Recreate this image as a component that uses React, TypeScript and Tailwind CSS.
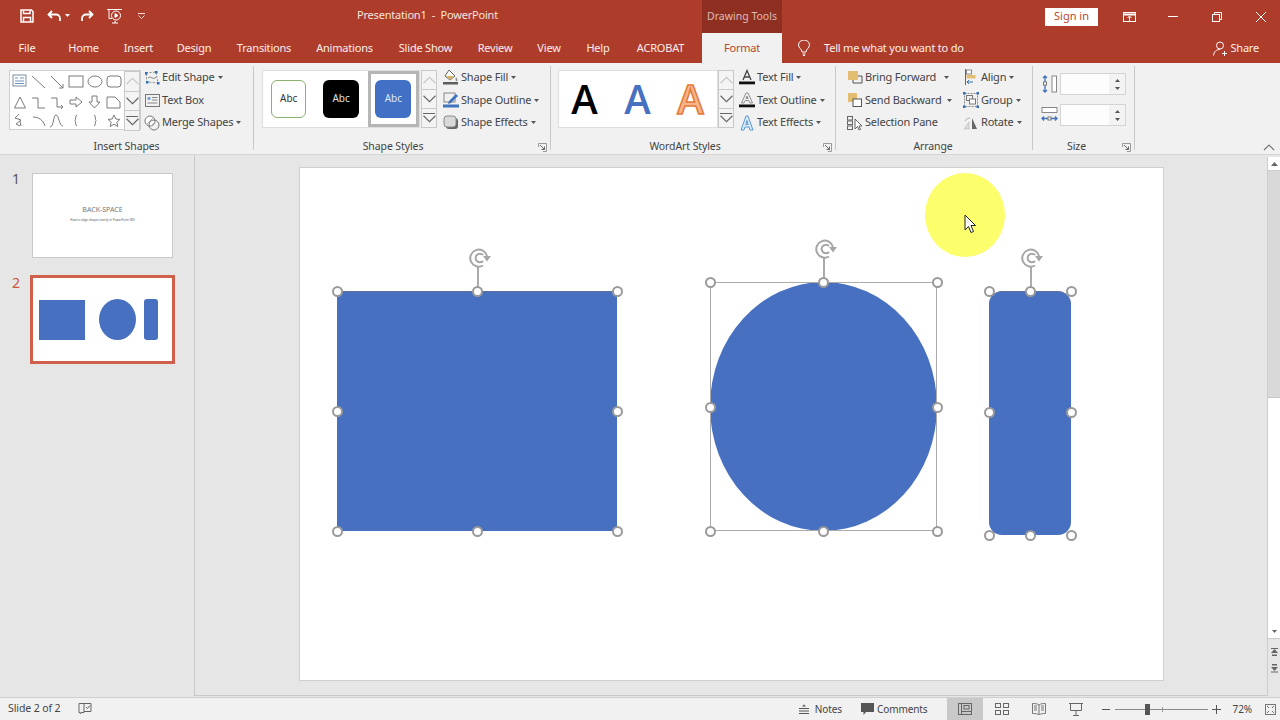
import React from "react";

const TABS: [string, number][] = [
  ["File", 54], ["Home", 59], ["Insert", 51], ["Design", 60], ["Transitions", 80], ["Animations", 81],
  ["Slide Show", 81], ["Review", 58], ["View", 50], ["Help", 48], ["ACROBAT", 77],
];

function Caret({ className = "text-[#555]" }: { className?: string }) {
  return (
    <svg width="5" height="3" viewBox="0 0 5 3" className={className}>
      <path d="M0 0h5L2.500 3z" fill="currentColor" />
    </svg>
  );
}

function Chevron({ up = false, faded = false }: { up?: boolean; faded?: boolean }) {
  return (
    <svg width="13" height="8" viewBox="0 0 12 7">
      <path d={up ? "M0.5 6.5L6 1l5.5 5.5" : "M0.5 0.5L6 6l5.5-5.5"} fill="none" stroke={faded ? "#c8c8c8" : "#666"} strokeWidth="1" />
    </svg>
  );
}

function GalleryScroll({ height = "h-[60px]" }: { height?: string }) {
  return (
    <div className={`flex flex-col w-4 ${height} border border-[#c9c9c9] bg-[#f4f4f4] divide-y divide-[#c9c9c9]`}>
      <div className="flex-1 flex items-center justify-center"><Chevron up faded /></div>
      <div className="flex-1 flex items-center justify-center"><Chevron /></div>
      <div className="flex-1 flex flex-col items-center justify-center gap-[1px]">
        <div className="w-3 h-px bg-[#666]" />
        <Chevron />
      </div>
    </div>
  );
}

function Launcher() {
  return (
    <svg width="9" height="9" viewBox="0 0 9 9" className="absolute right-[3px] bottom-[2px]">
      <path d="M0.5 4V0.5H8.5V8.5H5" fill="none" stroke="#9a9a9a" />
      <path d="M2 2l4.5 4.5M6.5 3.500v3h-3" fill="none" stroke="#666" />
    </svg>
  );
}

function Group({ width, label, pr = "", launcher = false, children }: { width: string; label: string; pr?: string; launcher?: boolean; children: React.ReactNode }) {
  return (
    <div className={`relative flex flex-col h-full shrink-0 ${width}`}>
      <div className="flex-1 flex min-h-0">{children}</div>
      <div className={`h-[20px] pt-[6px] flex items-center justify-center text-[10.500px] tracking-[-0.1px] text-[#444] ${pr}`}>{label}</div>
      {launcher && <Launcher />}
    </div>
  );
}

function Sep() {
  return <div className="w-px h-[84px] mt-[3px] bg-[#c8c8c8] shrink-0" />;
}

function Cmd({ icon, label, caret = true, gap = "ml-[3px]" }: { icon: React.ReactNode; label: string; caret?: boolean; gap?: string }) {
  return (
    <div className="h-[23px] flex items-center text-[11px] tracking-[-0.2px] text-[#444] whitespace-nowrap">
      <span className="w-[16px] h-[16px] flex items-center justify-center shrink-0">{icon}</span>
      <span className="ml-[2px]">{label}</span>
      {caret && <span className={`${gap} flex`}><Caret /></span>}
    </div>
  );
}

const ShapesGallery = () => (
  <svg width="114" height="60" viewBox="0 0 114 60" fill="none" stroke="#7a7a7a" strokeWidth="1">
    <rect x="3" y="4" width="13" height="11" fill="#fff" stroke="#7a8ba5" />
    <path d="M5 7h3M5 10h9M5 12.500h9M10 7h4" stroke="#6f93c4" />
    <path d="M22 5l13 12M41 5l12 12M53 17v-4M53 17h-4" />
    <rect x="59" y="5" width="14" height="11" />
    <ellipse cx="85" cy="10.500" rx="7" ry="5.500" />
    <rect x="97" y="5" width="14" height="11" rx="3" />
    <path d="M4.500 37L10 26l5.500 11z" />
    <path d="M22 27h6v10h7M41 27h6v9h6l-2-2M51 38l2-2" />
    <path d="M60 29h6v-3l6 5-6 5v-3h-6z" />
    <path d="M82 25h5v6h3l-5.500 6-5.500-6h3z" />
    <path d="M97 26h8l5 5v6H97z" />
    <path d="M9 43l-4 4 6 2-5 4 4 2M10 50l1 5" />
    <path d="M23 46c6 0 10 3 12 9M40 56c4 0 3-12 6-12s3 11 7 11" />
    <path d="M66 44c-2 0-1 5-2 5.500c1 .5 0 5.500 2 5.500M83 44c2 0 1 5 2 5.500c-1 .5 0 5.500-2 5.500" transform="translate(1 0)" />
    <path d="M104 44l1.800 4 4.200.4-3.200 2.800 1 4.300-3.800-2.300-3.800 2.300 1-4.300-3.200-2.800 4.200-.4z" />
  </svg>
);

const EditShapeIcon = () => (
  <svg width="16" height="15" viewBox="0 0 16 15" fill="none">
    <path d="M2 3l10-1 2 11-11-1z" stroke="#888" strokeDasharray="2 1.500" />
    <path d="M4 8c3-3 5 3 8-1" stroke="#888" />
    <g fill="#2f6fb5"><rect x="1" y="2" width="2.500" height="2.500" /><rect x="11" y="1" width="2.500" height="2.500" /><rect x="13" y="12" width="2.500" height="2.500" /><rect x="2" y="11" width="2.500" height="2.500" /></g>
  </svg>
);

const TextBoxIcon = () => (
  <svg width="15" height="13" viewBox="0 0 15 13" fill="none">
    <rect x="0.500" y="0.500" width="14" height="12" stroke="#777" />
    <path d="M2.500 3h3v3h-3z" fill="#7fa2cf" />
    <path d="M7 3.500h5.500M7 6h5.500M2.500 9h10" stroke="#888" />
  </svg>
);

const MergeIcon = () => (
  <svg width="16" height="16" viewBox="0 0 16 16" fill="none" stroke="#777">
    <circle cx="6" cy="6" r="5" fill="#fff" />
    <circle cx="10" cy="10" r="5" />
    <path d="M3 9l6-6M7 11l4-4" stroke="#aaa" />
  </svg>
);

const FillIcon = () => (
  <svg width="16" height="16" viewBox="0 0 16 16" fill="none">
    <path d="M6 1l6 6-5 4-5-4z" fill="#fff" stroke="#666" />
    <path d="M3 7h8l-4 4z" fill="#d9b36a" />
    <path d="M13 8c1 2 2 3 1 4s-2-1-1-4z" fill="#888" />
    <rect x="0" y="13" width="15" height="2.500" fill="#5d5d5d" />
  </svg>
);

const OutlineIcon = () => (
  <svg width="16" height="16" viewBox="0 0 16 16" fill="none">
    <rect x="1" y="1" width="11" height="9" stroke="#888" />
    <path d="M6 9l7-7 2 2-7 7-3 1z" fill="#3f72bf" />
    <rect x="0" y="12.500" width="16" height="3" fill="#3f72bf" />
  </svg>
);

const EffectsIcon = () => (
  <svg width="16" height="15" viewBox="0 0 16 15">
    <rect x="3" y="3" width="12" height="11" rx="3" fill="#666" />
    <rect x="1" y="1" width="12" height="11" rx="3" fill="#d9d9d9" stroke="#8a8a8a" />
  </svg>
);

const TextFillIcon = () => (
  <svg width="16" height="16" viewBox="0 0 16 16" fill="none">
    <path d="M4 11L8 1.500 12 11M5.500 8h5" stroke="#444" strokeWidth="1.300" />
    <rect x="0" y="12.500" width="16" height="2.800" fill="#111" />
  </svg>
);

const TextOutlineIcon = () => (
  <svg width="16" height="16" viewBox="0 0 16 16" fill="none">
    <path d="M2.500 11L7 1h2l4.500 10h-2.500L9.800 8.500H6.200L5 11zM7 6.500h2L8 4z" stroke="#777" strokeWidth="0.800" />
    <rect x="0" y="12.500" width="16" height="2.800" fill="#111" />
  </svg>
);

const TextEffectsIcon = () => (
  <svg width="16" height="16" viewBox="0 0 16 16" fill="#d7e9f7" stroke="#5b9bd5" strokeWidth="1">
    <path d="M2 15L7 1h2l5 14h-3l-1-3H6l-1 3zM6.800 9.500h2.400L8 5.500z" />
  </svg>
);

const BringIcon = () => (
  <svg width="16" height="15" viewBox="0 0 16 15">
    <rect x="1" y="1" width="10" height="9" fill="#e2bd72" />
    <path d="M11 6h4v7H6v-3" fill="none" stroke="#555" />
  </svg>
);

const SendIcon = () => (
  <svg width="16" height="16" viewBox="0 0 16 16">
    <rect x="1" y="1" width="9" height="9" fill="#e2bd72" />
    <rect x="6" y="7" width="8.500" height="7.500" fill="#fff" stroke="#555" />
  </svg>
);

const PaneIcon = () => (
  <svg width="16" height="16" viewBox="0 0 16 16" fill="none" stroke="#666">
    <rect x="0.500" y="1.500" width="5" height="3.500" />
    <rect x="0.500" y="6" width="5" height="3.500" />
    <rect x="0.500" y="11" width="5" height="3.500" />
    <path d="M8 4v10l2.500-2.500 1.500 3.500 1.500-.7-1.500-3.300h3z" fill="#fff" />
  </svg>
);

const AlignIcon = () => (
  <svg width="16" height="16" viewBox="0 0 16 16" fill="none">
    <path d="M2.500 0v16" stroke="#666" />
    <rect x="3.500" y="1" width="5" height="4" fill="#fff" stroke="#888" />
    <rect x="3.500" y="6" width="9" height="3.500" fill="#e2bd72" />
    <path d="M10 13H4M6 11l-2 2 2 2" stroke="#2f6fb5" />
  </svg>
);

const GroupIcon = () => (
  <svg width="16" height="16" viewBox="0 0 16 16" fill="none">
    <rect x="1.500" y="1.500" width="13" height="13" stroke="#8a8a8a" strokeDasharray="2 1" />
    <rect x="3.500" y="3.500" width="6" height="5" stroke="#777" />
    <rect x="6.500" y="7" width="6" height="5" fill="#fff" stroke="#777" />
    <g fill="#2f6fb5"><rect x="0" y="0" width="2.500" height="2.500" /><rect x="13.500" y="0" width="2.500" height="2.500" /><rect x="0" y="13.500" width="2.500" height="2.500" /><rect x="13.500" y="13.500" width="2.500" height="2.500" /></g>
  </svg>
);

const RotateIcon = () => (
  <svg width="16" height="14" viewBox="0 0 16 14">
    <path d="M9 13V2l5 11z" fill="#666" />
    <path d="M1 13l5-7v7z" fill="#ddd" stroke="#aaa" strokeWidth="0.500" />
    <path d="M2 5c1-2 3-3 5-3" fill="none" stroke="#aaa" />
  </svg>
);

const HeightIcon = () => (
  <svg width="17" height="18" viewBox="0 0 17 18" fill="none">
    <path d="M4 1v16M2 3l2-2 2 2M2 15l2 2 2-2" stroke="#3f72bf" strokeWidth="1.300" />
    <rect x="2.500" y="7" width="3" height="3" fill="#fff" stroke="#777" />
    <rect x="11" y="1" width="4.500" height="16" fill="#fff" stroke="#888" />
  </svg>
);

const WidthIcon = () => (
  <svg width="17" height="18" viewBox="0 0 17 18" fill="none">
    <rect x="1" y="1.500" width="15" height="5" fill="#fff" stroke="#888" />
    <path d="M1 12.500h15M3 10.500l-2 2 2 2M14 10.500l2 2-2 2" stroke="#3f72bf" strokeWidth="1.300" />
    <rect x="7" y="11" width="3" height="3" fill="#fff" stroke="#777" />
  </svg>
);

function SizeInput() {
  return (
    <div className="w-[66px] h-[22px] flex items-stretch bg-[#fdfdfd] border border-[#d4d4d4]">
      <div className="flex-1" />
      <div className="w-[16px] flex flex-col items-center justify-center gap-[5px] bg-[#f3f3f3]">
        <svg width="5" height="3" viewBox="0 0 5 3"><path d="M0 3h5L2.500 0z" fill="#555" /></svg>
        <Caret />
      </div>
    </div>
  );
}

type Pt = [number, number];
type Sel = { x: number; y: number; w: number; h: number; shape: string; rot: Pt; xs: number[]; ys: number[]; box: boolean };

const SLIDE_SHAPES: Sel[] = [
  { x: 37, y: 123, w: 280, h: 240, shape: "bg-[#4870c0] border-t border-[#5a6f9e]", rot: [179, 90], xs: [37, 177, 317], ys: [123, 243, 363], box: false },
  { x: 410, y: 114, w: 227, h: 249, shape: "bg-[#4870c0] rounded-[50%]", rot: [525, 81], xs: [410, 523, 637], ys: [114, 239, 363], box: true },
  { x: 689, y: 123, w: 82, h: 244, shape: "bg-[#4870c0] rounded-[13px] border-t border-[#5a6f9e]", rot: [731, 90], xs: [689, 730, 771], ys: [123, 244, 367], box: false },
];

function RotHandle({ at }: { at: Pt }) {
  return (
    <svg width="24" height="22" viewBox="0 0 24 22" className="absolute" style={{ left: at[0] - 11, top: at[1] - 11 }} fill="none">
      <path d="M19 9A8.500 8.500 0 1 0 15 18.500" stroke="#a6a6a6" strokeWidth="2" />
      <path d="M15 14A4.300 4.300 0 1 1 15 8" stroke="#a6a6a6" strokeWidth="2" />
      <path d="M15 9h8l-4 5.500z" fill="#a6a6a6" />
    </svg>
  );
}

function SlideShape({ s }: { s: Sel }) {
  const pts: Pt[] = [];
  s.ys.forEach((y, j) => s.xs.forEach((x, i) => { if (!(i === 1 && j === 1)) pts.push([x, y]); }));
  return (
    <>
      <div className={`absolute ${s.shape}`} style={{ left: s.x, top: s.y, width: s.w, height: s.h }} />
      {s.box && <div className="absolute border border-[#ababab]" style={{ left: s.x, top: s.y, width: s.w, height: s.h }} />}
      <div className="absolute w-[1.500px] bg-[#ababab]" style={{ left: s.xs[1], top: s.rot[1] + 9, height: s.y - s.rot[1] - 9 }} />
      <RotHandle at={s.rot} />
      {pts.map(([x, y]) => (
        <div key={`${x}-${y}`} className="absolute w-[11px] h-[11px] rounded-full bg-white border-2 border-[#9a9a9a]" style={{ left: x - 5, top: y - 5 }} />
      ))}
    </>
  );
}

export default function App() {
  return (
    <div className="w-[1280px] h-[720px] overflow-hidden flex flex-col bg-[#e6e6e6] [font-family:'Noto_Sans',sans-serif]">
      {/* Title bar */}
      <div className="relative h-[33px] shrink-0 bg-[#ae3c2b] flex items-center text-white">
        <div className="flex items-center pl-[20px] pb-[2px]">
          <svg width="14" height="14" viewBox="0 0 14 14" fill="none" stroke="#fff" strokeWidth="1.500">
            <path d="M1 1h10.500L13 2.500V13H1z" />
            <path d="M3.500 1.500v3h6.500v-3M3.500 13V8.500h7V13" />
          </svg>
          <svg width="15" height="12" viewBox="0 0 15 12" fill="none" stroke="#fff" strokeWidth="1.800" className="ml-[13px]">
            <path d="M5 1L1.500 4.500 5 8M2 4.500h7a4 4 0 0 1 4 4V11" />
          </svg>
          <span className="ml-[3px] flex"><Caret className="text-white" /></span>
          <svg width="14" height="12" viewBox="0 0 14 12" fill="none" stroke="#fff" strokeWidth="1.800" className="ml-[10px]">
            <path d="M9 1l3.500 3.500L9 8M12 4.500H6a4 4 0 0 0-4 4V11" />
          </svg>
          <svg width="16" height="16" viewBox="0 0 16 16" fill="none" stroke="#fff" className="ml-[13px]">
            <path d="M0 1.500h15M2 1.500v9h3M5 15h6M8 13v2" />
            <circle cx="9" cy="7.500" r="4.500" />
            <path d="M8 5.500l3 2-3 2z" fill="#fff" />
          </svg>
          <svg width="7" height="6" viewBox="0 0 7 6" fill="none" stroke="#f1d7d2" className="ml-[15px]">
            <path d="M0 .5h7M.5 2.500L3.500 5.500 6.500 2.500" />
          </svg>
        </div>
        <div className="absolute left-[357px] top-[7px] text-[11px] tracking-[-0.2px] text-[#f5e3df] whitespace-pre">Presentation1  -  PowerPoint</div>
        <div className="absolute left-[702px] top-0 w-[80px] h-[33px] bg-[#8f2f21] flex items-center justify-center text-[10.500px] text-[#ddbcb5]">Drawing Tools</div>
        <div className="ml-auto flex items-center">
          <div className="w-[53px] h-[18px] bg-white flex items-center justify-center text-[11px] text-[#b7472a]">Sign in</div>
          <svg width="13" height="10" viewBox="0 0 13 10" fill="none" stroke="#fff" className="ml-[25px]">
            <rect x="0.500" y="0.500" width="12" height="9" />
            <path d="M0.500 2.500h12" strokeWidth="2" />
            <path d="M6.500 9V4.500M4.500 6l2-2 2 2" />
          </svg>
          <div className="w-[10px] h-px bg-white ml-[32px]" />
          <svg width="10" height="10" viewBox="0 0 10 10" fill="none" stroke="#fff" className="ml-[34px]">
            <rect x="0.500" y="2.500" width="7" height="7" />
            <path d="M2.500 2.500v-2h7v7h-2" />
          </svg>
          <svg width="10" height="10" viewBox="0 0 10 10" fill="none" stroke="#fff" className="ml-[34px] mr-[14px]">
            <path d="M0 0l10 10M10 0L0 10" />
          </svg>
        </div>
      </div>

      {/* Tabs */}
      <div className="h-[30px] shrink-0 bg-[#ae3c2b] flex items-stretch text-[11px] tracking-[-0.2px] text-[#fbeeeb]">
        {TABS.map(([t, w]) => (
          <div key={t} className="flex items-center justify-center" style={{ width: w }}>{t}</div>
        ))}
        <div className="ml-[3px] w-[80px] bg-[#f1f1f1] text-[#b7472a] flex items-center justify-center">Format</div>
        <svg width="12" height="16" viewBox="0 0 12 16" fill="none" stroke="#fff" className="ml-[16px] self-center">
          <path d="M4 12c0-3-3.500-4-3.500-7a5.500 5 0 0 1 11 0c0 3-3.500 4-3.500 7zM4.500 14h3M5 15.500h2" />
        </svg>
        <div className="ml-[14px] flex items-center">Tell me what you want to do</div>
        <div className="ml-auto flex items-center mr-[21px]">
          <svg width="14" height="15" viewBox="0 0 14 15" fill="none" stroke="#fff">
            <circle cx="7" cy="4.500" r="3.500" />
            <path d="M0.500 14.500c.5-4 3-6 6.500-6M9 12.500h5M11.500 10v5" />
          </svg>
          <span className="ml-[3px]">Share</span>
        </div>
      </div>

      {/* Ribbon */}
      <div className="relative h-[92px] shrink-0 bg-[#f1f1f1] border-b border-[#d6d6d6] flex items-start">
        <Group width="w-[253px]" label="Insert Shapes">
          <div className="mt-[7px] ml-[9px] h-[60px] bg-white border border-[#cfcfcf] flex">
            <ShapesGallery />
            <GalleryScroll />
          </div>
          <div className="ml-[3px] mt-[3px] flex flex-col">
            <Cmd icon={<EditShapeIcon />} label="Edit Shape" />
            <Cmd icon={<TextBoxIcon />} label="Text Box" caret={false} />
            <Cmd icon={<MergeIcon />} label="Merge Shapes" />
          </div>
        </Group>
        <Sep />
        <Group width="w-[296px]" label="Shape Styles" pr="pr-[18px]" launcher>
          <div className="mt-[7px] ml-[8px] flex">
            <div className="w-[158px] h-[58px] bg-white border border-[#dedede] flex items-center pl-[8px] relative text-[10px]">
              <div className="w-[36px] h-[38px] rounded-[6px] bg-white border border-[#8cb26f] flex items-center justify-center pb-[2px] text-[#333]">Abc</div>
              <div className="ml-[17px] w-[36px] h-[38px] rounded-[6px] bg-black flex items-center justify-center pb-[2px] text-[#e0e0e0]">Abc</div>
              <div className="ml-[9px] w-[52px] h-[56px] border-[3px] border-[#b6b6b6] flex items-center justify-center">
                <div className="w-[36px] h-[38px] rounded-[6px] bg-[#4270c4] flex items-center justify-center pb-[2px] text-[#dfe7f5]">Abc</div>
              </div>
            </div>
            <div className="ml-[1px]"><GalleryScroll height="h-[58px]" /></div>
          </div>
          <div className="ml-[6px] mt-[3px] flex flex-col">
            <Cmd icon={<FillIcon />} label="Shape Fill" />
            <Cmd icon={<OutlineIcon />} label="Shape Outline" />
            <Cmd icon={<EffectsIcon />} label="Shape Effects" />
          </div>
        </Group>
        <Sep />
        <Group width="w-[284px]" label="WordArt Styles" pr="pr-[16px]" launcher>
          <div className="mt-[7px] ml-[7px] flex">
            <div className="w-[160px] h-[58px] bg-white border border-[#dedede] flex items-center text-[40px] font-semibold leading-none [font-family:'Open_Sans',sans-serif]">
              <span className="w-[53px] text-center ml-[-1px] text-black">A</span>
              <span className="w-[53px] text-center text-[#4870c0]">A</span>
              <span className="w-[53px] text-center text-[#f6b48a] [-webkit-text-stroke:1.500px_#e4793a]">A</span>
            </div>
            <GalleryScroll height="h-[58px]" />
          </div>
          <div className="ml-[5px] mt-[3px] flex flex-col">
            <Cmd icon={<TextFillIcon />} label="Text Fill" />
            <Cmd icon={<TextOutlineIcon />} label="Text Outline" />
            <Cmd icon={<TextEffectsIcon />} label="Text Effects" />
          </div>
        </Group>
        <Sep />
        <Group width="w-[196px]" label="Arrange" pr="pr-[2px]">
          <div className="ml-[11px] mt-[3px] flex flex-col w-[116px]">
            <Cmd icon={<BringIcon />} label="Bring Forward" gap="ml-[8px]" />
            <Cmd icon={<SendIcon />} label="Send Backward" gap="ml-[6px]" />
            <Cmd icon={<PaneIcon />} label="Selection Pane" caret={false} />
          </div>
          <div className="mt-[3px] flex flex-col">
            <Cmd icon={<AlignIcon />} label="Align" />
            <Cmd icon={<GroupIcon />} label="Group" />
            <Cmd icon={<RotateIcon />} label="Rotate" />
          </div>
        </Group>
        <Sep />
        <Group width="w-[101px]" label="Size" pr="pr-[14px]" launcher>
          <div className="ml-[8px] mt-[10px] flex flex-col gap-[9px]">
            <div className="flex items-center gap-[2px]"><HeightIcon /><SizeInput /></div>
            <div className="flex items-center gap-[2px]"><WidthIcon /><SizeInput /></div>
          </div>
        </Group>
        <Sep />
        <svg width="12" height="7" viewBox="0 0 12 7" fill="none" stroke="#777" strokeWidth="1.200" className="absolute right-[5px] bottom-[3px]">
          <path d="M1 6l5-5 5 5" />
        </svg>
      </div>

      {/* Main */}
      <div className="flex-1 min-h-0 flex">
        <div className="w-[195px] shrink-0 border-r border-[#c8c8c8] mb-[1px] relative">
          <div className="flex mt-[15px] pl-[12px] text-[14px] text-[#555] leading-[18px]">
            <span className="w-[20px]">1</span>
            <div className="mt-[3px] w-[141px] h-[85px] bg-white border border-[#c9c9c9] flex flex-col items-center justify-center">
              <div className="text-[7px] leading-[8px] text-[#777] mt-[-4px]">BACK-SPACE</div>
              <div className="text-[3px] leading-[4px] mt-[4px] text-[#555]">How to align shapes evenly in PowerPoint 365</div>
            </div>
          </div>
          <div className="flex mt-[17px] pl-[12px] text-[14px] text-[#c9553f] leading-[18px]">
            <span className="w-[18px] mt-[-1px]">2</span>
            <div className="w-[145px] h-[89px] bg-white border-[3px] border-[#d0604c] flex items-center">
              <div className="ml-[6px] w-[46px] h-[40px] bg-[#4870c0]" />
              <div className="ml-[14px] w-[37px] h-[41px] rounded-[50%] bg-[#4870c0]" />
              <div className="ml-[8px] w-[14px] h-[41px] rounded-[3px] bg-[#4870c0]" />
            </div>
          </div>
        </div>
        <div className="flex-1 flex flex-col border-b border-[#c8c8c8] mb-[1px]">
          <div className="ml-[104px] mt-[12px] w-[865px] h-[514px] bg-white border border-[#cfcfcf] relative shrink-0">
            {SLIDE_SHAPES.map((s) => <SlideShape key={s.x} s={s} />)}
            <div className="absolute left-[625px] top-[5px] w-[80px] h-[84px] rounded-[50%] bg-[#fdfe6b]" />
            <svg width="12" height="20" viewBox="0 0 12 20" className="absolute left-[664px] top-[46px]">
              <path d="M1 1v15l3.500-3.500 2.500 6 2.500-1-2.500-6h4.500z" fill="#fff" stroke="#222" />
            </svg>
          </div>
        </div>
        <div className="w-[13px] shrink-0 bg-[#d9d9d9] border-l border-[#cdcdcd] flex flex-col mb-[1px] mt-[2px]">
          <div className="h-[14px] bg-white flex items-center justify-center border-b border-[#cdcdcd]">
            <svg width="7" height="4" viewBox="0 0 7 4"><path d="M0 4h7L3.500 0z" fill="#666" /></svg>
          </div>
          <div className="h-[226px]" />
          <div className="h-[228px] bg-white border-t border-[#c8c8c8]" />
          <div className="h-[14px] bg-white flex items-center justify-center border-b border-[#cdcdcd]">
            <Caret className="text-[#666]" />
          </div>
          <div className="flex-1 bg-[#e6e6e6] flex flex-col items-center gap-[6px] pt-[8px]">
            <svg width="7" height="10" viewBox="0 0 7 10" fill="#666"><path d="M0 1h7v1H0zM0 6h7L3.500 2zM1 7.500h5V9H1z" /></svg>
            <svg width="7" height="10" viewBox="0 0 7 10" fill="#666"><path d="M1 1h5v1.500H1zM0 4h7L3.500 8zM0 8.500h7v1H0z" /></svg>
          </div>
        </div>
      </div>

      {/* Status bar */}
      <div className="h-[23px] shrink-0 bg-[#f1f1f1] border-t border-[#d0d0d0] flex items-center text-[10px] tracking-[-0.1px] text-[#444] whitespace-nowrap">
        <span className="ml-[8px] text-[10.500px]">Slide 2 of 2</span>
        <svg width="14" height="14" viewBox="0 0 14 14" fill="none" stroke="#666" className="ml-[17px]">
          <path d="M1 1.500h5v9H3l-.5 1.500-.5-1.500H1zM6 1.500h7v8H6M8 5l1.500 1.500L12 3.500" />
        </svg>
        <svg width="10" height="10" viewBox="0 0 10 10" fill="none" stroke="#555" className="ml-auto">
          <path d="M0 4.500h10M0 7h10M0 9.500h10" />
          <path d="M3 2.500L5 .5l2 2z" fill="#555" stroke="none" />
        </svg>
        <span className="ml-[6px]">Notes</span>
        <svg width="13" height="13" viewBox="0 0 13 13" className="ml-[19px]">
          <path d="M0 0h13v9H5l-2.500 3V9H0z" fill="#555" />
        </svg>
        <span className="ml-[3px]">Comments</span>
        <div className="ml-[19px] w-[36px] h-[22px] bg-[#c9c9c9] flex items-center justify-center">
          <svg width="14" height="12" viewBox="0 0 14 12" fill="none" stroke="#666">
            <rect x="0.500" y="0.500" width="13" height="11" />
            <path d="M3.500.5v11M3.500 8.500h10" />
            <rect x="6" y="2.500" width="5" height="3.500" />
          </svg>
        </div>
        <svg width="14" height="12" viewBox="0 0 14 12" fill="none" stroke="#666" className="ml-[12px]">
          <rect x="0.500" y="0.500" width="5" height="4" /><rect x="8.500" y="0.500" width="5" height="4" />
          <rect x="0.500" y="7.500" width="5" height="4" /><rect x="8.500" y="7.500" width="5" height="4" />
        </svg>
        <svg width="14" height="12" viewBox="0 0 14 12" fill="none" stroke="#777" className="ml-[23px]">
          <path d="M7 2C5 .5 3 .5.500.500v10c2.500 0 4.500 0 6.500 1.500 2-1.500 4-1.500 6.500-1.500V.5C11 .5 9 .5 7 2zM7 2v10M2 3h3M2 5h3M2 7h3M9 3h3M9 5h3M9 7h3" />
        </svg>
        <svg width="14" height="13" viewBox="0 0 14 13" fill="none" stroke="#666" className="ml-[23px]">
          <path d="M0 .5h14M1.500 .5v7h11v-7M7 7.500V12M4 12.500h6" />
        </svg>
        <div className="ml-[19px] w-[8px] h-px bg-[#555]" />
        <div className="ml-[5px] w-[93px] h-px bg-[#8a8a8a] relative">
          <div className="absolute left-[30px] top-[-5px] w-[5px] h-[11px] bg-[#555]" />
          <div className="absolute left-[47px] top-[-2px] w-px h-[5px] bg-[#999]" />
        </div>
        <svg width="9" height="9" viewBox="0 0 9 9" stroke="#555" className="ml-[4px]"><path d="M0 4.500h9M4.500 0v9" /></svg>
        <span className="ml-[12px]">72%</span>
        <svg width="11" height="11" viewBox="0 0 11 11" fill="none" stroke="#777" className="ml-[13px] mr-[4px]">
          <rect x="0.500" y="0.500" width="10" height="10" />
          <path d="M2 2l2 2M9 2L7 4M2 9l2-2M9 9L7 7" />
        </svg>
      </div>
    </div>
  );
}
